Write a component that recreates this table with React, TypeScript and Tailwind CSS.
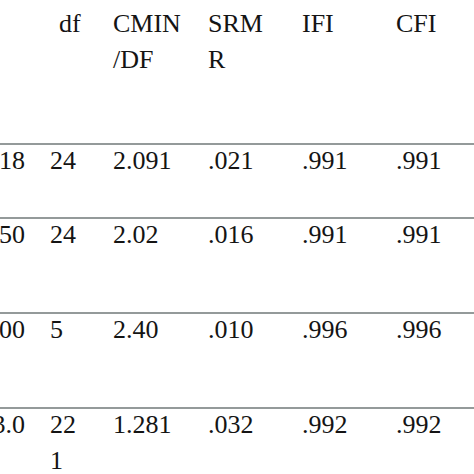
const rows = [
  { lead: "50.18", df: ["24"], cmin: "2.091", srmr: ".021", ifi: ".991", cfi: ".991", h: "h-[74px]" },
  { lead: "48.50", df: ["24"], cmin: "2.02", srmr: ".016", ifi: ".991", cfi: ".991", h: "h-[95px]" },
  { lead: "12.00", df: ["5"], cmin: "2.40", srmr: ".010", ifi: ".996", cfi: ".996", h: "h-[95px]" },
  { lead: "283.0", df: ["22", "1"], cmin: "1.281", srmr: ".032", ifi: ".992", cfi: ".992", h: "h-[80px]" },
];

export default function App() {
  return (
    <div
      className="w-[474px] h-[474px] overflow-hidden bg-white text-[#141414] text-[26px] leading-[36px]"
      style={{ fontFamily: '"Liberation Serif", "Times New Roman", serif' }}
    >
      <div className="flex h-[143px] pt-[6px]">
        <div className="w-[25px] shrink-0" />
        <div className="w-[25px] shrink-0" />
        <div className="w-[63px] shrink-0 pl-[9px]">df</div>
        <div className="w-[95px] shrink-0">
          CMIN
          <br />
          /DF
        </div>
        <div className="w-[94px] shrink-0">
          SRM
          <br />R
        </div>
        <div className="w-[94px] shrink-0">IFI</div>
        <div className="w-[120px] shrink-0">CFI</div>
      </div>

      {rows.map((r, i) => (
        <div key={i} className={`flex w-[600px] border-t-2 border-[#949a9a] ${r.h}`}>
          <div className="w-[25px] shrink-0 flex justify-end -mt-[2px] whitespace-nowrap">{r.lead}</div>
          <div className="w-[25px] shrink-0" />
          <div className="w-[63px] shrink-0 -mt-[2px]">
            {r.df.map((d, j) => (
              <div key={j}>{d}</div>
            ))}
          </div>
          <div className="w-[95px] shrink-0 -mt-[2px]">{r.cmin}</div>
          <div className="w-[94px] shrink-0 -mt-[2px]">{r.srmr}</div>
          <div className="w-[94px] shrink-0 -mt-[2px]">{r.ifi}</div>
          <div className="w-[120px] shrink-0 -mt-[2px]">{r.cfi}</div>
        </div>
      ))}
    </div>
  );
}
